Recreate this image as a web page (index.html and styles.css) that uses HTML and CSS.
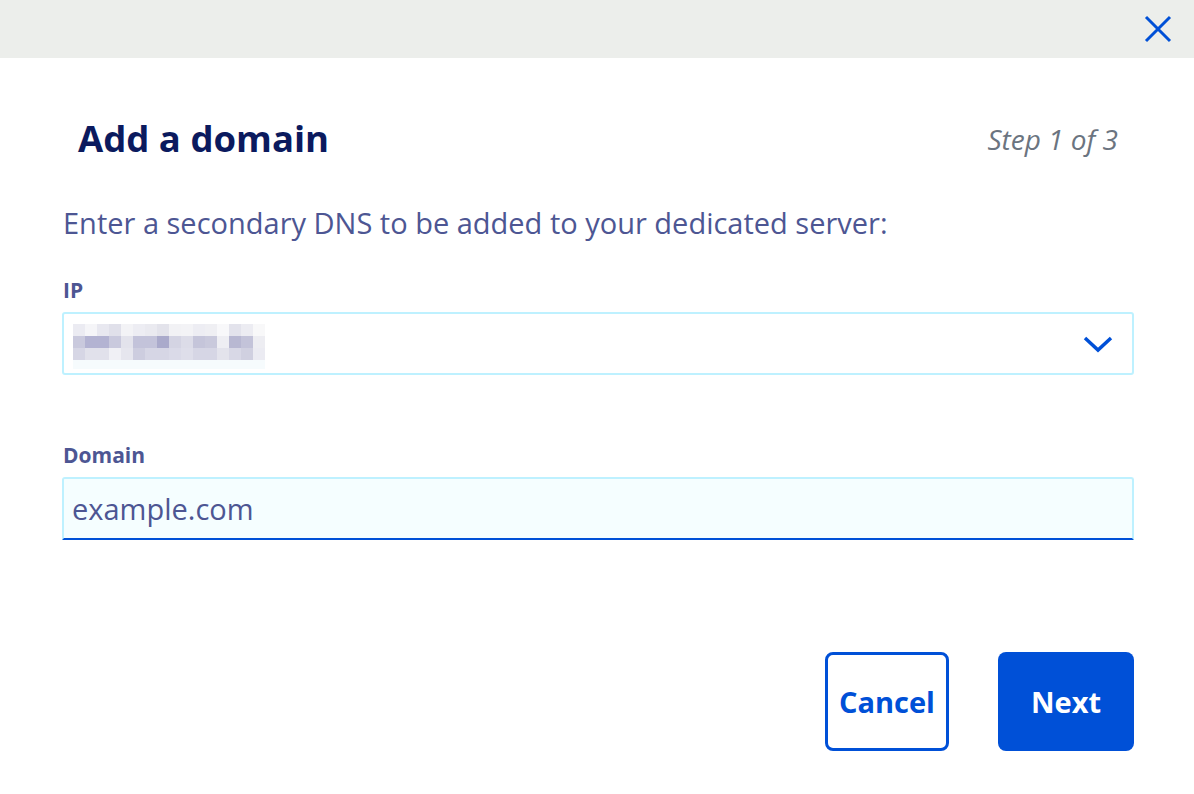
FILE: index.html
```html
<!DOCTYPE html>
<html lang="en">
<head>
    <meta charset="UTF-8">
    <meta name="viewport" content="width=device-width, initial-scale=1.0">
    <title>Add a domain</title>
    <link rel="stylesheet" href="styles.css">
</head>
<body>
    <div class="modal">
        <div class="modal-top">
            <button class="close-btn" aria-label="Close">
                <svg width="28" height="28" viewBox="0 0 28 28"><path d="M2 2L26 26M26 2L2 26" stroke="#0050d7" stroke-width="3" fill="none"/></svg>
            </button>
        </div>

        <div class="modal-body">
            <div class="modal-head">
                <h1>Add a domain</h1>
                <span class="step">Step 1 of 3</span>
            </div>

            <p class="intro">Enter a secondary DNS to be added to your dedicated server:</p>

            <form id="domainForm">
                <label for="ip">IP</label>
                <div class="select" id="ip">
                    <!-- ip address is blurred out -->
                    <div class="blur">
                        <div class="row r1"></div>
                        <div class="row r2"></div>
                        <div class="row r3"></div>
                        <div class="row r4"></div>
                    </div>
                    <svg class="chevron" width="30" height="18" viewBox="0 0 30 18"><path d="M2 3L15 15L28 3" stroke="#0050d7" stroke-width="3.5" fill="none"/></svg>
                </div>

                <label for="domain" class="domain-label">Domain</label>
                <input type="text" id="domain" name="domain" placeholder="example.com">

                <div class="actions">
                    <button type="button" class="btn btn-outline">Cancel</button>
                    <button type="button" class="btn btn-primary">Next</button>
                </div>
            </form>
        </div>
    </div>
</body>
</html>
```

FILE: styles.css
```css
body {
    margin: 0;
    font-family: "Open Sans", sans-serif;
    background: #fff;
}
.modal {
    width: 1194px;
    height: 794px;
}
.modal-top {
    height: 58px;
    background-color: #eceeeb;
    display: flex;
    justify-content: flex-end;
    align-items: center;
    padding-right: 22px;
}
.close-btn {
    background: none;
    border: none;
    padding: 0;
    cursor: pointer;
    display: flex;
}
.modal-body {
    padding: 0 60px 0 62px;
}
.modal-head {
    display: flex;
    justify-content: space-between;
    align-items: baseline;
    padding: 55px 16px 0 16px;
}
h1 {
    margin: 0;
    font-size: 36.5px;
    font-weight: 700;
    color: #0b1a5e;
}
.step {
    font-size: 28px;
    font-style: italic;
    color: #6b7480;
    position: relative;
    top: -2px;
}
.intro {
    margin: 40px 0 0 1px;
    font-size: 29px;
    color: #4d5693;
}
label {
    display: block;
    font-size: 21px;
    font-weight: 700;
    color: #4d5693;
    margin: 34px 0 8px 1px;
}
.select {
    box-sizing: border-box;
    height: 63px;
    border: 2px solid #bef1ff;
    border-radius: 3px;
    display: flex;
    align-items: center;
    justify-content: space-between;
    padding: 0 19px 0 9px;
}
.blur {
    width: 192px;
    margin-top: 5px;
}
.row {
    height: 12px;
}
.r1 {
    background: linear-gradient(90deg, #ebebf2 0 12px, #f5f5f8 12px 24px, #e8e8f0 24px 36px, #e0e0ea 36px 48px, #f3f3f6 48px 60px, #ededf3 60px 72px, #eaeaf0 72px 84px, #e3e3eb 84px 96px, #f2f2f5 96px 108px, #f3f3f6 108px 120px, #ededf3 120px 132px, #efeff3 132px 144px, #f8f8fa 144px 156px, #e3e3ec 156px 168px, #ececf2 168px 180px, #f8f8f9 180px 192px);
}
.r2 {
    background: linear-gradient(90deg, #c9c9dd 0 12px, #b3b3d2 12px 36px, #c9c9dd 36px 48px, #e3e3ec 48px 60px, #c3c3da 60px 84px, #aaaacb 84px 96px, #d4d4e3 96px 108px, #dcdce8 108px 120px, #c5c5da 120px 132px, #c9c9dc 132px 144px, #eeeef3 144px 156px, #b8b8d2 156px 168px, #c3c3d9 168px 180px, #ededf2 180px 192px);
}
.r3 {
    background: linear-gradient(90deg, #d6d6e5 0 12px, #e1e1eb 12px 36px, #f0f0f5 36px 48px, #e6e6ee 48px 60px, #cdcddf 60px 72px, #d6d6e5 72px 96px, #dadae8 96px 108px, #dedeea 108px 120px, #d6d6e5 120px 144px, #e3e3ec 144px 156px, #d8d8e6 156px 168px, #d0d0e0 168px 180px, #ebebf2 180px 192px);
}
.r4 {
    height: 9px;
    background: #f6fbfd;
}
.domain-label {
    margin-top: 66px;
}
input {
    display: block;
    box-sizing: border-box;
    width: 100%;
    height: 63px;
    border: 2px solid #bef1ff;
    border-bottom: 2px solid #0050d7;
    border-radius: 3px 3px 0 0;
    background-color: #f5feff;
    padding: 0 8px;
    font-family: inherit;
    font-size: 29px;
    color: #4d5693;
    outline: none;
}
input::placeholder {
    color: #4d5693;
}
.actions {
    display: flex;
    justify-content: flex-end;
    gap: 49px;
    margin-top: 112px;
}
.btn {
    height: 99px;
    border-radius: 8px;
    font-family: inherit;
    font-size: 29px;
    font-weight: 700;
    cursor: pointer;
}
.btn-outline {
    width: 124px;
    background: #fff;
    border: 3px solid #0050d7;
    color: #0050d7;
}
.btn-primary {
    width: 136px;
    background: #0050d7;
    border: none;
    color: #fff;
}
```
